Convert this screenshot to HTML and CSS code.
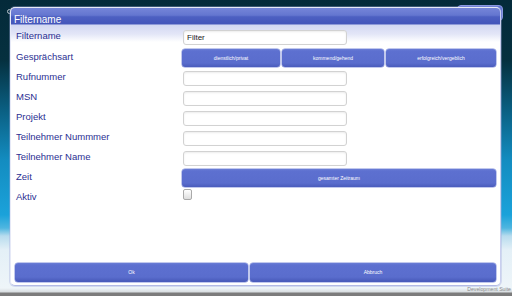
FILE: index.html
```html
<!DOCTYPE html>
<html>
<head>
<meta charset="utf-8">
<link rel="stylesheet" href="styles.css">
</head>
<body>
<div class="screen">
  <div class="ring"></div>
  <div class="backtab"></div>
  <div class="dialog">
    <div class="titlebar">Filtername</div>
    <div class="form">
      <div class="row first">
        <div class="label">Filtername</div>
        <div class="input">Filter</div>
      </div>
      <div class="row">
        <div class="label">Gesprächsart</div>
        <div class="btngroup">
          <div class="btn">dienstlich/privat</div>
          <div class="btn">kommend/gehend</div>
          <div class="btn">erfolgreich/vergeblich</div>
        </div>
      </div>
      <div class="row">
        <div class="label">Rufnummer</div>
        <div class="input"></div>
      </div>
      <div class="row">
        <div class="label">MSN</div>
        <div class="input"></div>
      </div>
      <div class="row">
        <div class="label">Projekt</div>
        <div class="input"></div>
      </div>
      <div class="row">
        <div class="label">Teilnehmer Nummmer</div>
        <div class="input"></div>
      </div>
      <div class="row">
        <div class="label">Teilnehmer Name</div>
        <div class="input"></div>
      </div>
      <div class="row">
        <div class="label">Zeit</div>
        <div class="btn wide">gesamter Zeitraum</div>
      </div>
      <div class="row short">
        <div class="label">Aktiv</div>
        <div class="check"></div>
      </div>
    </div>
    <div class="footer">
      <div class="btn big">Ok</div>
      <div class="btn big">Abbruch</div>
    </div>
  </div>
  <div class="brand">Development Suite</div>
</div>
</body>
</html>
```

FILE: styles.css
```css
* { box-sizing: border-box; }
html, body {
  margin: 0;
  padding: 0;
  width: 512px;
  height: 296px;
  overflow: hidden;
}
body {
  font-family: "Liberation Sans", Arial, sans-serif;
  background: linear-gradient(to bottom,
    #042a3a 0px, #05303f 60px, #0a5f82 110px, #138cc0 160px,
    #1ba2da 215px, #4fb6e0 228px, #b8dcee 236px, #e4f0f7 250px,
    #eef5f9 288px, #d8dde0 292px, #7c7c7c 293px, #7c7c7c 296px);
}
.screen {
  position: relative;
  width: 512px;
  height: 296px;
  padding: 7px 11px 0 10px;
}
.ring {
  position: absolute;
  left: 7px;
  top: 9px;
  width: 5px;
  height: 5px;
  border: 1px solid #b8c4cc;
  border-radius: 50%;
}
.backtab {
  position: absolute;
  left: 457px;
  top: 5px;
  width: 46px;
  height: 16px;
  background: #5a6ecf;
  border: 1px solid #8a98e0;
  border-radius: 4px;
}
.dialog {
  position: relative;
  width: 491px;
  height: 279px;
  background: #fff;
  border: 1px solid #e6e9f7;
  border-bottom-color: #b3bbe6;
  border-right-color: #c9cfee;
  border-radius: 5px;
  display: flex;
  flex-direction: column;
  overflow: hidden;
  box-shadow: 0 0 0 1px rgba(160,170,220,0.35);
}
.titlebar {
  height: 17px;
  padding: 7px 0 0 3px;
  line-height: 10px;
  font-size: 10px;
  color: #fff;
  background: linear-gradient(to bottom, #7585d8 0%, #6476d0 45%, #4d60c2 55%, #4456ba 100%);
  border-bottom: 1px solid #8e9ad8;
}
.form {
  flex: 1;
  padding: 0 4px 0 5px;
}
.row {
  display: grid;
  grid-template-columns: 166px 1fr;
  align-items: start;
  height: 20px;
}
.row.first {
  height: 23px;
  padding-top: 2px;
  margin: 0 -4px 0 -5px;
  padding-left: 5px;
  padding-right: 4px;
  background: linear-gradient(to bottom, #d3d8f2 0px, #e3e6f7 9px, #ffffff 17px);
}
.row.short { height: 14px; }
.label {
  font-size: 9.5px;
  line-height: 11px;
  color: #2b2f92;
  padding-top: 2.5px;
  white-space: nowrap;
}
.input {
  margin-top: 3px;
  width: 164px;
  margin-left: 1px;
  height: 15px;
  border: 1px solid #d2d2d2;
  border-radius: 3px;
  background: #fff;
  box-shadow: inset 0 1px 2px rgba(0,0,0,0.08);
  font-size: 8px;
  line-height: 13px;
  padding-left: 3px;
  color: #222;
}
.btngroup {
  margin-top: 1px;
  display: grid;
  grid-template-columns: 98fr 102fr 110fr;
  gap: 2px;
}
.btn {
  height: 18px;
  background: linear-gradient(to bottom, #6a7dd6 0px, #5d70d0 2px, #5a6dcd 14px, #4a5cbc 18px);
  border-radius: 3px;
  color: #fff;
  font-size: 5px;
  line-height: 18px;
  text-align: center;
  white-space: nowrap;
  box-shadow: 0 0 0 0.5px #8391dc;
}
.btn.wide { margin-top: 1px; }
.check {
  margin-top: 1px;
  margin-left: 1px;
  width: 9px;
  height: 11px;
  border: 1px solid #a9a9a9;
  border-radius: 2px;
  background: linear-gradient(to bottom, #ffffff, #dedede);
}
.footer {
  display: grid;
  grid-template-columns: 233fr 246fr;
  gap: 2px;
  padding: 0 4px 3px 4px;
}
.btn.big {
  height: 19px;
  line-height: 19px;
}
.brand {
  position: absolute;
  right: 1px;
  top: 286px;
  font-size: 5.2px;
  color: #8a8a8a;
  white-space: nowrap;
}
```
